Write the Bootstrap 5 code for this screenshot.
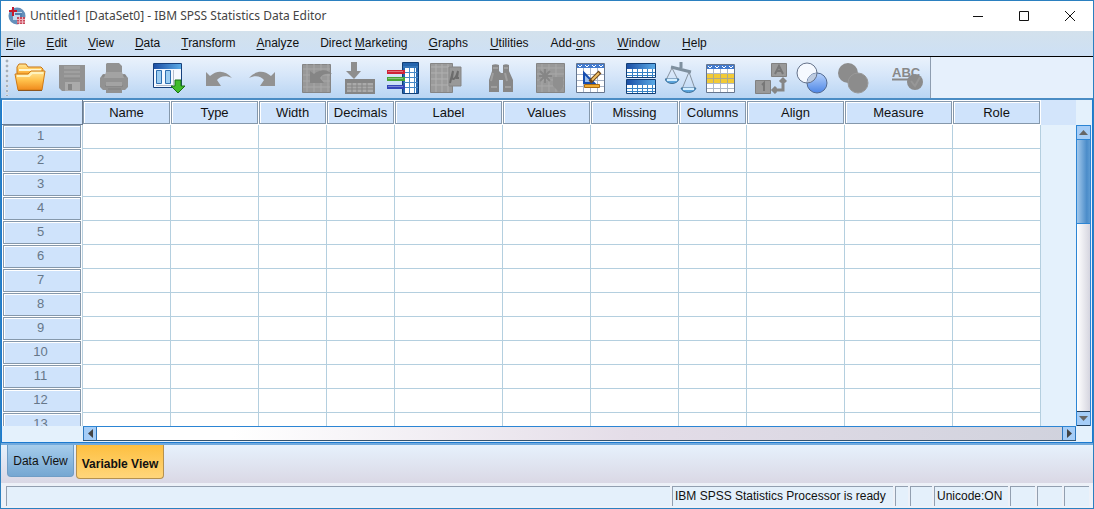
<!DOCTYPE html>
<html lang="en">
<head>
<meta charset="utf-8">
<meta name="viewport" content="width=device-width, initial-scale=1">
<title>Untitled1 [DataSet0] - IBM SPSS Statistics Data Editor</title>
<link href="https://cdn.jsdelivr.net/npm/bootstrap@5.3.0/dist/css/bootstrap.min.css" rel="stylesheet">
<style>
  body { font-family: "Liberation Sans", Arial, sans-serif; font-size: 12px; line-height: 16px; color: #111; }
  button { font: inherit; color: inherit; padding: 0; border: 0; background: none; }
  .app-window { border: 1px solid #2b80c0; background: #e4f0fb; }
  .title-bar { background: #fff; height: 30px; padding-left: 7px; font-family: "Noto Sans", sans-serif; color: #444; }
  .title-bar svg { display: block; }
  .win-btn { width: 46px; height: 30px; }
  .win-btn svg { margin: 0 auto; }
  .menu-bar { height: 26px; background: linear-gradient(#d3e1ec, #cde0f5); border-bottom: 1px solid #000; padding: 0 0 2px 5px; gap: 21px; }
  .menu-bar a { color: #111; text-decoration: none; }
  .menu-bar u { text-underline-offset: 2px; }
  .menu-more { gap: 22px; }
  .tool-area { background: #e6f0fc; }
  .tool-strip { height: 41px; width: 930px; padding-left: 4px; gap: 10px; border-right: 1px solid #8e9db0; background: linear-gradient(#eaf2fc, #d6e6f9 45%, #b9d5f3); }
  .tool-strip > * { flex: none; }
  .tool-grip { width: 5px; height: 37px; margin-right: -10px; background: radial-gradient(circle at 2px 2px, #a2afbd 1px, #fff 2px, transparent 2px) 0 0 / 5px 5px; }
  .tool-group.wide { margin-left: 5px; }
  .gap-two { gap: 2px; } .gap-three { gap: 3px; } .gap-one { gap: 1px; }
  .tool-btn { width: 40px; height: 40px; }
  .tool-btn svg { display: block; margin: 0 auto; }
  .grid-pane { border: solid #1b7ad0; border-width: 2px 1px 1px; border-top-color: #4a8cc4; background: #e4f1fc; padding: 0 1px 1px 0; }
  .grid-view { background: linear-gradient(#d3e5fb 25px, #e4f1fc 25px); }
  .var-table { table-layout: fixed; width: 1039px; font-size: 13px; border-collapse: separate; border-spacing: 0; }
  .var-table th { padding: 1px; font-weight: 400; text-align: center; background: #fff; }
  .var-table thead th { height: 25px; border-right: 1px solid #fff; padding: 1px 0; }
  .var-table thead th.corner { background: #cfe3fb; border: solid #6b7d92; border-width: 0 1px 1px 0; box-shadow: inset 1px 1px #fff; }
  .head-box { border: 1px solid #8598ab; box-shadow: inset 1px 1px #fff; background: #cfe3fb; height: 23px; line-height: 21px; }
  .var-table tbody th { height: 24px; color: #667789; border-right: 1px solid #b9d0df; padding: 0 1px 1px; }
  .var-table tbody .head-box { line-height: 20px; padding-right: 3px; }
  .var-table td { height: 24px; padding: 0; background: #fff; border: solid #b4cfdf; border-width: 0 1px 1px 0; }
  .scroll-v { width: 15px; margin-top: 25px; border: solid #2c85d4; border-width: 1px 1px 0; background: linear-gradient(90deg, #fff, #d5d5df); }
  .scroll-h { height: 15px; margin-left: 81px; margin-right: 15px; border: solid #2c85d4; border-width: 1px 0; border-bottom-color: #33536f; background: linear-gradient(90deg, #fff 15%, #e4dde8 55%, #d0d2dd); }
  .arrow-btn { width: 14px; height: 13px; background: #a5cdf7; flex: none; }
  .arrow-btn svg { display: block; margin: 0 auto; }
  .scroll-v .arrow-btn { width: 13px; }
  .scroll-h .arrow-btn { border: solid #2c75bb; border-width: 0 1px; }
  .scroll-v .thumb { height: 85px; border: solid #2c85d4; border-width: 1px 0; background: linear-gradient(90deg, #a3c9ec, #4b8cc9 75%, #5d9bd3); }
  .scroll-v .arrow-btn:last-child { border: solid #223e5b; border-width: 1px 0; height: 15px; }
  .view-tabs { height: 40px; padding-left: 6px; gap: 2px; border-top: 2px solid #71a9dc; background: linear-gradient(#e6f1fc, #dad8e5); }
  .view-tab { width: 67px; height: 32px; border: 1px solid #6f9dc6; border-top: 0; border-radius: 0 0 4px 4px; background: linear-gradient(#a6cdec, #75a7d2); }
  .view-tab.current { width: 88px; height: 34px; padding-top: 4px; font-weight: 700; border-color: #b5914f; background: linear-gradient(#fdbf40, #ffd67b); }
  .status-bar { padding: 3px 4px 2px 5px; gap: 2px; background: #edf1f8; }
  .status-cell { height: 20px; padding-left: 2px; line-height: 19px; border: solid #929fb0; border-width: 1px 0 0 1px; background: #e4f0fb; white-space: nowrap; }
  .w-ready { width: 221px; } .w-tiny { width: 13px; } .w-small { width: 22px; } .w-code { width: 74px; } .w-cell { width: 25px; }
</style>
</head>
<body>
<div class="app-window vh-100 d-flex flex-column overflow-hidden">
  <header class="title-bar d-flex align-items-center flex-shrink-0">
    <svg width="18" height="18" viewBox="0 0 18 18" aria-hidden="true"><circle cx="9" cy="9" r="8.500" fill="#6590bb"/><path d="M5 5h9v8H5z" fill="#c3d9ee"/><path d="M7 7h6v6" fill="none" stroke="#527fb0" stroke-width="2"/><path d="M5 0v9M1 4h8" stroke="#c5192d" stroke-width="2"/><path d="M9 10h8v7H9z" fill="#c84a5c"/><path d="M9 12.500h8M9 15h8M11.500 10v7M14.500 10v7" stroke="#f0b6c0"/></svg>
    <span class="flex-grow-1 ms-1">Untitled1 [DataSet0] - IBM SPSS Statistics Data Editor</span>
    <button class="win-btn" aria-label="Minimize"><svg width="12" height="12"><path d="M1 6.500h10" stroke="#111"/></svg></button>
    <button class="win-btn" aria-label="Maximize"><svg width="12" height="12"><path d="M1.500 1.500h9v9h-9z" fill="none" stroke="#111"/></svg></button>
    <button class="win-btn" aria-label="Close"><svg width="12" height="12"><path d="M1 1l10 10M11 1L1 11" stroke="#111"/></svg></button>
  </header>

  <nav class="menu-bar d-flex align-items-center flex-shrink-0">
    <a href="#"><u>F</u>ile</a><a href="#"><u>E</u>dit</a><a href="#"><u>V</u>iew</a><a href="#"><u>D</u>ata</a><a href="#"><u>T</u>ransform</a><a href="#"><u>A</u>nalyze</a><a href="#">Direct <u>M</u>arketing</a>
    <div class="menu-more d-flex"><a href="#"><u>G</u>raphs</a><a href="#"><u>U</u>tilities</a><a href="#">Add-<u>o</u>ns</a><a href="#"><u>W</u>indow</a><a href="#"><u>H</u>elp</a></div>
  </nav>

  <svg width="0" height="0" class="position-absolute" aria-hidden="true">
    <defs>
      <linearGradient id="orange" x2="0" y2="1"><stop stop-color="#ffe9a0"/><stop offset=".5" stop-color="#ffc04a"/><stop offset="1" stop-color="#f08a1c"/></linearGradient>
      <linearGradient id="blue"><stop stop-color="#1c4fa5"/><stop offset="1" stop-color="#5aaae6"/></linearGradient>
      <linearGradient id="ball" x2="0" y2="1"><stop stop-color="#b7d2fb"/><stop offset="1" stop-color="#4d86e6"/></linearGradient>
    </defs>
  </svg>

  <div class="tool-area flex-shrink-0">
    <div class="tool-strip d-flex align-items-center">
      <span class="tool-grip"></span>
      <div class="tool-group d-flex gap-two">
        <button class="tool-btn" aria-label="Open"><svg width="32" height="32" viewBox="0 0 32 32"><path d="M3 12V5l2-3h7l2 3h13l2 2v8H3z" fill="url(#orange)" stroke="#c77414"/><path d="M5 8h22" stroke="#fff6d0" stroke-width="2"/><path d="M1 12h13l3-3h14l-3 19H4z" fill="url(#orange)" stroke="#d07a14"/><path d="M3 14h12l3-3h11" fill="none" stroke="#fff3bf" stroke-width="2"/><path d="M4 28.500h24" stroke="#8e5720"/></svg></button>
        <button class="tool-btn" aria-label="Save"><svg width="32" height="32" viewBox="0 0 32 32"><path d="M3 3h26v26H6l-3-3z" fill="#929292"/><path d="M8 4h16v12H8z" fill="#a0a0a0"/><path d="M8 8h16M8 12h16M8 16h16" stroke="#888"/><path d="M9 20h15v9H9z" fill="#aaa"/><path d="M12 22h4v6h-4z" fill="#858585"/></svg></button>
        <button class="tool-btn" aria-label="Print"><svg width="32" height="32" viewBox="0 0 32 32"><path d="M9 1h12l3 3v8h3l3 4v9l-3 3h-3v3H8v-3H5l-3-3v-9l3-4h3V2z" fill="#929292"/><path d="M4 14h24M7 24h18M10 27h13" stroke="#808080"/><path d="M8 10l-2 6h20l-2-6M8 20h16v4H8z" fill="#a3a3a3"/></svg></button>
      </div>
      <div class="tool-group wide d-flex"><button class="tool-btn" aria-label="Recall dialog"><svg width="32" height="32" viewBox="0 0 32 32"><path d="M.5 1.500h28v24H.5z" fill="#f5f9ff" stroke="#16407c"/><path d="M1 2h27v5H1z" fill="url(#blue)"/><path d="M3.500 8.500h5v13h-5zM12.500 8.500h5v13h-5z" fill="#9ccdf2" stroke="#2d6eaf"/><path d="M3 23.500h17M20.500 8v15" stroke="#b5bdca"/><path d="M22 18h6v6h4l-7 7-7-7h4z" fill="#41bd2b" stroke="#1b7116"/></svg></button></div>
      <div class="tool-group d-flex gap-three">
        <button class="tool-btn" aria-label="Undo"><svg width="32" height="32" viewBox="0 0 32 32"><path d="M3 10l4 4c7-6 15-6 22 2-6-3-12-2-15 2l4 6H3z" fill="#929292"/></svg></button>
        <button class="tool-btn" aria-label="Redo"><svg width="32" height="32" viewBox="0 0 32 32"><path d="M29 10l-4 4C18 8 10 8 3 16c6-3 12-2 15 2l-4 6h15z" fill="#929292"/></svg></button>
      </div>
      <div class="tool-group wide d-flex gap-three">
        <button class="tool-btn" aria-label="Go to case"><svg width="32" height="32" viewBox="0 0 32 32"><path d="M1.500 2.500h28v28h-28z" fill="#989898" stroke="#858585"/><path d="M6 2v28M13 2v28M20 2v28M27 2v28M2 7h27M2 13h27M2 19h27M2 25h27" stroke="#a8a8a8"/><path d="M9 9l4 3c6-5 13-5 18 0-6-1-10 0-12 4l4 5H9z" fill="#858585"/></svg></button>
        <button class="tool-btn" aria-label="Go to variable"><svg width="32" height="32" viewBox="0 0 32 32"><path d="M7 0h6v9h4l-7 8-8-8h5z" fill="#8e8e8e"/><path d="M1 17h30v15H1z" fill="#858585"/><path d="M3 21h26v9H3z" fill="#aaa"/><path d="M3 24h26M3 27h26M8 21v9M13 21v9M18 21v9M23 21v9" stroke="#858585"/></svg></button>
        <button class="tool-btn" aria-label="Variables"><svg width="32" height="32" viewBox="0 0 32 32"><path d="M15.500 .5h16v31h-16z" fill="#2464ae" stroke="#123f76"/><path d="M18 6h11v25H18z" fill="#fff"/><path d="M16 5h15M17 10.500h14M17 15.500h14M17 20.500h14M17 25.500h14M22.500 6v25M27.500 6v25" stroke="#4689c7"/><path d="M0 10h18" stroke="#cf2338" stroke-width="4"/><path d="M0 17h18" stroke="#47a637" stroke-width="4"/><path d="M0 25h18" stroke="#3445b9" stroke-width="4"/><path d="M1 9.500h15M1 16.500h15M1 24.500h15" stroke="#fff" opacity=".35"/></svg></button>
        <button class="tool-btn" aria-label="Run descriptive statistics"><svg width="32" height="32" viewBox="0 0 32 32"><path d="M.5 1.500h22v29H.5z" fill="#9b9b9b" stroke="#858585"/><path d="M1 5h21M1 11h21M1 17h21M1 23h21M6 2v28M12 2v28M18 2v28" stroke="#b0b0b0"/><path d="M19 5h12v19H19z" fill="#999" stroke="#858585"/><path d="M23 9l-3 12M23 9l-1 7c1 2 4 1 6-7l-1 7h2" fill="none" stroke="#6c6c6c" stroke-width="2"/></svg></button>
      </div>
      <div class="tool-group wide d-flex"><button class="tool-btn" aria-label="Find"><svg width="32" height="32" viewBox="0 0 32 32"><path d="M7 3c2-1 5-1 7 0v6l2 2h2V9V3c2-1 4-1 6 0v6l4 9v12H18V18h-4v12H4V18l3-9z" fill="#878787"/><path d="M8 6h5M19 6h4M8 11l-2 8M20 11l2 8M6 25h6M20 25h6" stroke="#9f9f9f" stroke-width="2"/></svg></button></div>
      <div class="tool-group d-flex">
        <button class="tool-btn" aria-label="Insert cases"><svg width="32" height="32" viewBox="0 0 32 32"><path d="M1.500 1.500h28v29h-28z" fill="#999" stroke="#858585"/><path d="M2 6h27M2 12h27M2 18h27M2 24h27M7 2v28M14 2v28M21 2v28" stroke="#a8a8a8"/><path d="M10 7v14M4 14h13M5 9l10 10M15 9L5 19" stroke="#868686" stroke-width="2"/><path d="M18 15h10v10l-4 5-6-6z" fill="#8f8f8f"/></svg></button>
        <button class="tool-btn" aria-label="Insert variable"><svg width="32" height="32" viewBox="0 0 32 32"><path d="M1.500 1.500h28v29h-28z" fill="#fff" stroke="#66768e"/><path d="M2 2h27v4H2z" fill="#427ace"/><path d="M3 3l2 2 2-2M10 3l2 2 2-2M17 3l2 2 2-2M24 3l2 2 2-2" stroke="#fff" fill="none"/><path d="M8.500 6v24M15.500 6v24M22.500 6v24M2 12.500h27M2 18.500h27M2 24.500h27" stroke="#a9b5c9"/><path d="M9 11v10h10z" fill="#9fc0ec" stroke="#174eb0" stroke-width="2"/><path d="M15 20L25 10" stroke="#704719" stroke-width="4"/><path d="M17 18l7-7" stroke="#f0c066" stroke-width="2"/><path d="M9.500 22.500h15v3h-15z" fill="#f2ad32" stroke="#aa6b13"/></svg></button>
      </div>
      <div class="tool-group d-flex">
        <button class="tool-btn" aria-label="Split file"><svg width="32" height="32" viewBox="0 0 32 32"><path d="M1.500 1.500h29v14h-29zM1.500 17.500h29v14h-29z" fill="#fff" stroke="#123f76"/><path d="M2 2h28v5H2zM2 18h28v5H2z" fill="url(#blue)"/><path d="M2 10.500h28M2 13.500h28M7.500 7v8M12.500 7v8M17.500 7v8M22.500 7v8M27.500 7v8M2 26.500h28M2 29.500h28M7.500 23v8M12.500 23v8M17.500 23v8M22.500 23v8M27.500 23v8" stroke="#3682c5"/></svg></button>
        <button class="tool-btn" aria-label="Weight cases"><svg width="32" height="32" viewBox="0 0 32 32"><path d="M16 0v6M6 5l20 5" stroke="#7f909f" stroke-width="3"/><path d="M7 6L1 18M7 6l6 12M24 10l-7 17M24 10l6 17" fill="none" stroke="#86929f"/><path d="M0 17h14c-2 6-12 6-14 0zM16 26h15c-2 6-13 6-15 0z" fill="#5ba4dc" stroke="#427298"/><path d="M2 18h10M18 27h11" stroke="#d5efff" stroke-width="2"/></svg></button>
        <button class="tool-btn" aria-label="Select cases"><svg width="32" height="32" viewBox="0 0 32 32"><path d="M1.500 2.500h28v28h-28z" fill="#fff" stroke="#66768e"/><path d="M2 3h27v4H2z" fill="#427ace"/><path d="M3 4l2 2 2-2M10 4l2 2 2-2M17 4l2 2 2-2M24 4l2 2 2-2" stroke="#fff" fill="none"/><path d="M2 12h27v9H2z" fill="#f2ca36"/><path d="M8.500 7v23M15.500 7v23M22.500 7v23M2 11.500h27M2 16.500h27M2 21.500h27M2 26.500h27" stroke="#8e9cb1" opacity=".7"/></svg></button>
      </div>
      <div class="tool-group d-flex gap-one">
        <button class="tool-btn" aria-label="Value labels"><svg width="32" height="32" viewBox="0 0 32 32"><path d="M16.500 1.500h15v13h-15zM.5 18.500h15v13H.5z" fill="#999" stroke="#818181"/><path d="M20 12l4-8 4 8M21 9h6M7 23l2-2v8" fill="none" stroke="#777" stroke-width="2"/><path d="M28 18v10h-9M25 20l3-3 3 3M21 25l-3 3 3 3" fill="none" stroke="#858585" stroke-width="3"/></svg></button>
        <button class="tool-btn" aria-label="Use variable sets"><svg width="32" height="32" viewBox="0 0 32 32"><circle cx="11" cy="11" r="10" fill="#f5f9ff"/><circle cx="21" cy="21" r="10" fill="url(#ball)" stroke="#526a92"/><path d="M11 20a10 10 0 0 1 10-9 10 10 0 0 1-10 10z" fill="#bdcbe0"/><circle cx="11" cy="11" r="10" fill="none" stroke="#65728a"/></svg></button>
        <button class="tool-btn" aria-label="Show all variables"><svg width="32" height="32" viewBox="0 0 32 32"><circle cx="11" cy="11" r="10" fill="#8c8c8c"/><circle cx="21" cy="21" r="10" fill="#8c8c8c" stroke="#999"/></svg></button>
      </div>
      <div class="tool-group wide d-flex"><button class="tool-btn" aria-label="Spell check"><svg width="32" height="32" viewBox="0 0 32 32"><text x="0" y="15" font-family="Liberation Sans" font-size="13" font-weight="700" fill="#888">ABC</text><circle cx="23" cy="20" r="8" fill="#8b8b8b"/><path d="M0 17.500h16" stroke="#888" stroke-width="2"/><path d="M19 19l4 5 5-9" fill="none" stroke="#979797" stroke-width="2"/></svg></button></div>
    </div>
  </div>

  <main class="grid-pane d-flex flex-column flex-grow-1 overflow-hidden">
    <div class="d-flex flex-grow-1 overflow-hidden">
      <div class="grid-view flex-grow-1 overflow-hidden">
        <table class="var-table">
          <colgroup><col style="width:81px"><col style="width:88px"><col style="width:88px"><col style="width:68px"><col style="width:68px"><col style="width:108px"><col style="width:88px"><col style="width:88px"><col style="width:68px"><col style="width:98px"><col style="width:108px"><col style="width:88px"></colgroup>
          <thead><tr><th class="corner"></th></tr></thead>
          <tbody></tbody>
        </table>
      </div>
      <div class="scroll-v d-flex flex-column flex-shrink-0">
        <button class="arrow-btn" aria-label="Scroll up"><svg width="9" height="5"><path d="M0 5l4.500-5L9 5z" fill="#666"/></svg></button>
        <div class="thumb"></div>
        <button class="arrow-btn mt-auto" aria-label="Scroll down"><svg width="9" height="5"><path d="M0 0l4.500 5L9 0z" fill="#666"/></svg></button>
      </div>
    </div>
    <div class="scroll-h d-flex justify-content-between flex-shrink-0">
      <button class="arrow-btn" aria-label="Scroll left"><svg width="5" height="9"><path d="M5 0L0 4.500 5 9z" fill="#444"/></svg></button>
      <button class="arrow-btn" aria-label="Scroll right"><svg width="5" height="9"><path d="M0 0l5 4.500L0 9z" fill="#444"/></svg></button>
    </div>
  </main>

  <div class="view-tabs d-flex align-items-start flex-shrink-0">
    <button class="view-tab">Data View</button>
    <button class="view-tab current">Variable View</button>
  </div>

  <footer class="status-bar d-flex flex-shrink-0">
    <div class="status-cell flex-grow-1"></div>
    <div class="status-cell w-ready">IBM SPSS Statistics Processor is ready</div>
    <div class="status-cell w-tiny"></div>
    <div class="status-cell w-small"></div>
    <div class="status-cell w-code">Unicode:ON</div>
    <div class="status-cell w-cell"></div>
    <div class="status-cell w-cell"></div>
    <div class="status-cell w-cell"></div>
  </footer>
</div>
<script>
  const fields = ["Name", "Type", "Width", "Decimals", "Label", "Values", "Missing", "Columns", "Align", "Measure", "Role"];
  document.querySelector(".var-table thead tr").insertAdjacentHTML("beforeend",
    fields.map(f => `<th scope="col"><div class="head-box">${f}</div></th>`).join(""));
  document.querySelector(".var-table tbody").innerHTML = Array.from({ length: 13 }, (_, i) =>
    `<tr><th scope="row"><div class="head-box">${i + 1}</div></th>${"<td></td>".repeat(fields.length)}</tr>`).join("");
</script>
<script src="https://cdn.jsdelivr.net/npm/bootstrap@5.3.0/dist/js/bootstrap.bundle.min.js"></script>
</body>
</html>
